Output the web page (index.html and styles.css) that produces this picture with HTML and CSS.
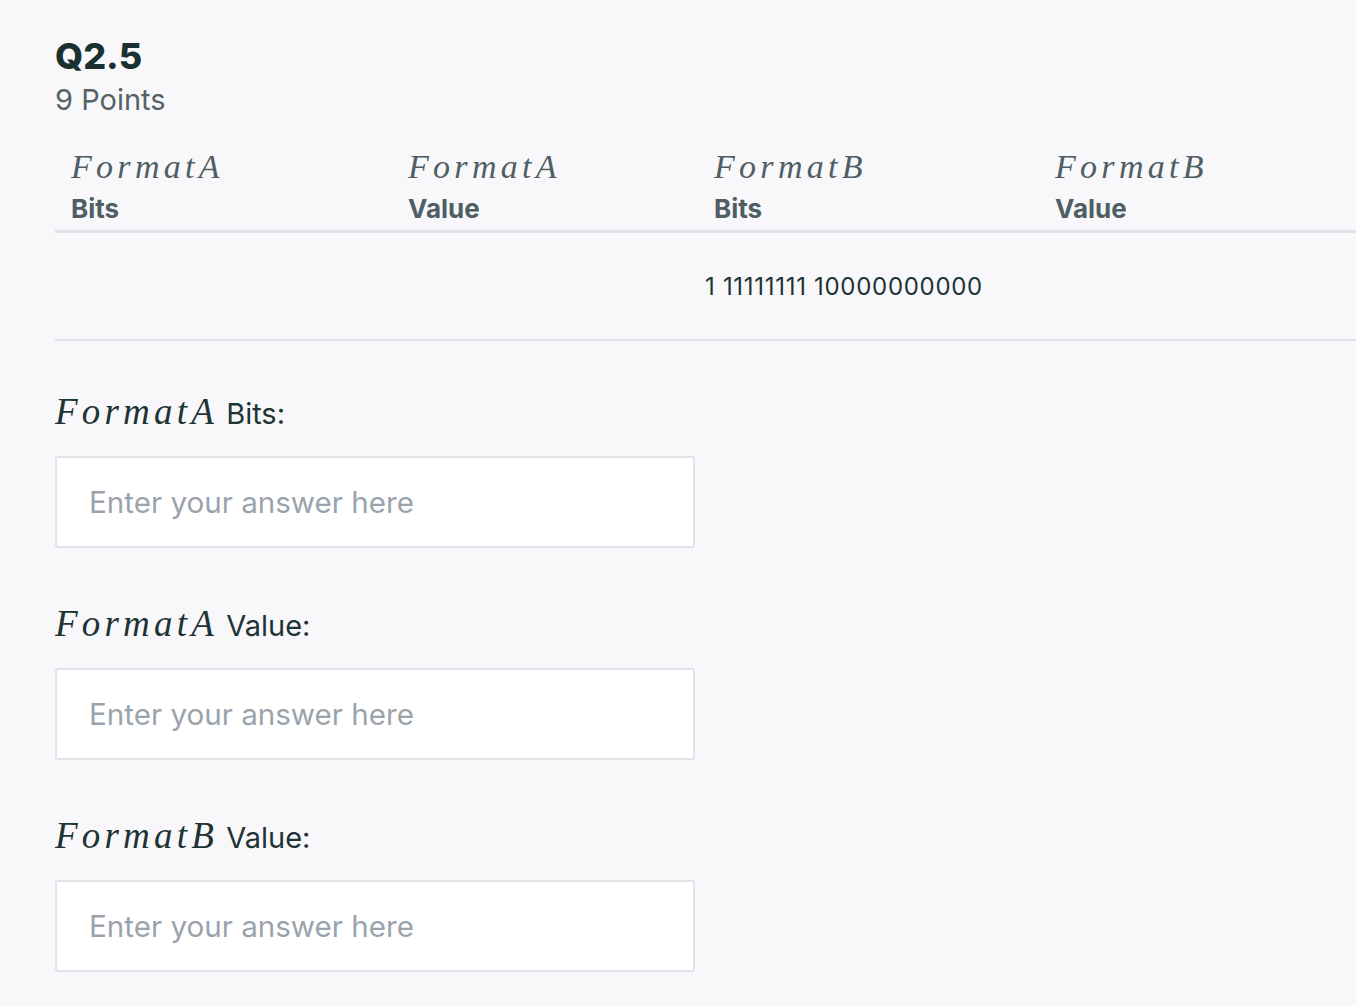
FILE: index.html
```html
<!DOCTYPE html>
<html>
<head>
<meta charset="utf-8">
<link rel="stylesheet" href="styles.css">
</head>
<body>
<main class="question">
  <h2 class="q-title">Q2.5</h2>
  <div class="q-points">9 Points</div>

  <div class="table">
    <div class="row head">
      <div class="cell"><span class="math">FormatA</span><span class="sub">Bits</span></div>
      <div class="cell"><span class="math">FormatA</span><span class="sub">Value</span></div>
      <div class="cell"><span class="math">FormatB</span><span class="sub">Bits</span></div>
      <div class="cell"><span class="math">FormatB</span><span class="sub">Value</span></div>
    </div>
    <div class="row body">
      <div class="cell"></div>
      <div class="cell"></div>
      <div class="cell">1 11111111 10000000000</div>
      <div class="cell"></div>
    </div>
  </div>

  <section class="fields">
    <div class="field">
      <label class="label"><span class="math">FormatA</span> Bits:</label>
      <input class="answer" type="text" placeholder="Enter your answer here">
    </div>
    <div class="field">
      <label class="label"><span class="math">FormatA</span> Value:</label>
      <input class="answer" type="text" placeholder="Enter your answer here">
    </div>
    <div class="field">
      <label class="label"><span class="math">FormatB</span> Value:</label>
      <input class="answer" type="text" placeholder="Enter your answer here">
    </div>
  </section>
</main>
</body>
</html>
```

FILE: styles.css
```css
html, body {
  margin: 0;
  padding: 0;
  background: #f8f8fa;
  font-family: "Inter", "Lato", sans-serif;
  color: #1e3334;
}

.question {
  padding: 32px 0 0 55px;
}

.q-title {
  margin: 0;
  font-size: 36px;
  font-weight: 800;
  line-height: 48px;
  color: #1b3031;
}

.q-points {
  font-size: 29px;
  line-height: 40px;
  margin-top: 0;
  color: #556267;
}

.math {
  font-family: "Liberation Serif", "DejaVu Serif", serif;
  font-style: italic;
}

.table {
  margin-top: 21px;
}

.row {
  display: grid;
  grid-template-columns: 337px 306px 341px 1fr;
}

.row.head {
  border-bottom: 3px solid #e2e3ea;
  height: 89px;
}

.row.head .cell {
  padding: 6px 16px 0;
  display: flex;
  flex-direction: column;
  color: #4f5e64;
}

.row.head .math {
  font-size: 34px;
  line-height: 40px;
  letter-spacing: 4.3px;
}

.row.head .sub {
  font-size: 26px;
  font-weight: 700;
  line-height: 32px;
  margin-top: 6px;
}

.row.body {
  border-bottom: 2px solid #e2e3ea;
  height: 106px;
  align-items: center;
}

.row.body .cell {
  padding: 0 7px;
  font-size: 24px;
  letter-spacing: 0.7px;
  color: #1e3334;
}

.fields {
  display: flex;
  flex-direction: column;
  gap: 56px;
  margin-top: 51px;
  width: 640px;
}

.label {
  display: block;
  font-size: 29px;
  line-height: 40px;
  color: #1e3334;
}

.label .math {
  font-size: 37px;
  letter-spacing: 4.2px;
}

.answer {
  display: block;
  box-sizing: border-box;
  margin-top: 22px;
  width: 640px;
  height: 92px;
  border: 2px solid #e0e3ea;
  border-radius: 3px;
  background: #ffffff;
  padding: 0 32px;
  font-family: "Inter", "Lato", sans-serif;
  font-size: 29.6px;
  color: #1e3334;
  outline: none;
}

.answer::placeholder {
  color: #9aa3ac;
}
```
